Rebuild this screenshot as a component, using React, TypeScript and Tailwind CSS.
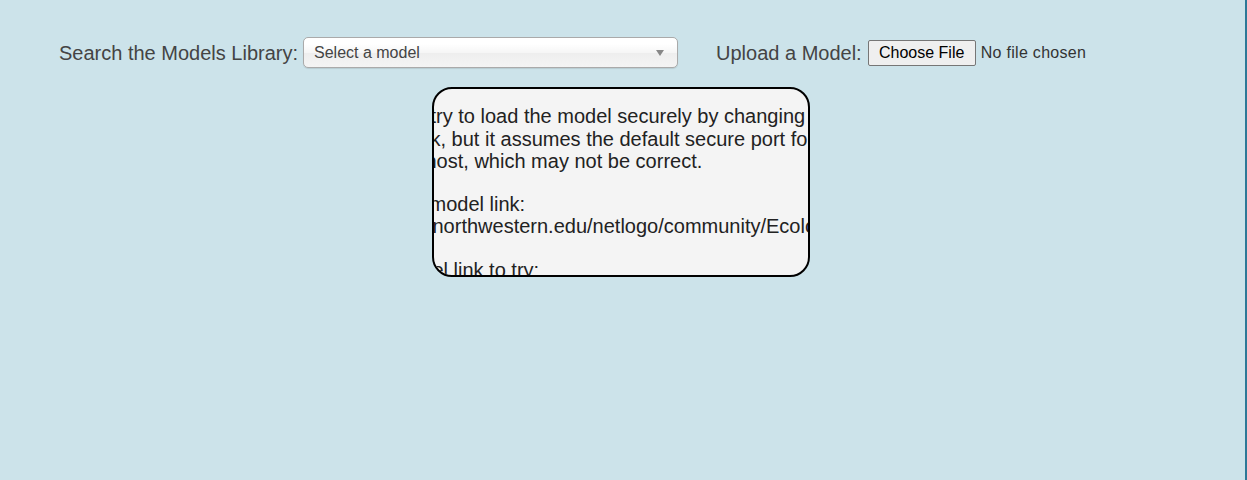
import React from 'react';

const font = { fontFamily: '"Liberation Sans", Arial, sans-serif' };

function ModelSelect() {
  return (
    <div className="relative flex h-[31px] w-[375px] items-center rounded-[5px] border border-[#aaa] bg-[linear-gradient(#fff_20%,#f6f6f6_50%,#eee_52%,#f4f4f4_100%)] pl-[10px] text-[16px] text-[#444] shadow-[0_1px_1px_rgba(0,0,0,0.1)]">
      <span>Select a model</span>
      <span className="absolute right-[13px] top-[12px] h-0 w-0 border-x-[4px] border-t-[6px] border-x-transparent border-t-[#888]" />
    </div>
  );
}

function FileInput() {
  return (
    <div className="flex items-center gap-[5px]">
      <button className="h-[26px] w-[108px] rounded-[2px] border border-[#767676] bg-[#efefef] text-[16px] leading-none text-black">
        Choose File
      </button>
      <span className="text-[16px] tracking-[0.3px] text-[#333]">No file chosen</span>
    </div>
  );
}

function WarningBox() {
  return (
    <div className="mx-auto h-[190px] w-[378px] overflow-hidden rounded-[20px] border-2 border-black bg-[#f4f4f4] -translate-x-[2px]">
      <div className="pt-[16px] text-[20px] leading-[22.5px] text-[#222] whitespace-nowrap">
        <div className="-ml-[3px]">try to load the model securely by changing the</div>
        <div className="-ml-[23px]">link, but it assumes the default secure port for the</div>
        <div className="-ml-[8px]">host, which may not be correct.</div>
        <div className="mt-[20px] -ml-[4px]">model link:</div>
        <div className="-ml-[1px]">northwestern.edu/netlogo/community/Ecology.nlogo</div>
        <div className="mt-[21px] -ml-[40px]">model link to try:</div>
      </div>
    </div>
  );
}

export default function App() {
  return (
    <div className="h-screen w-full overflow-hidden bg-[#cce3ea] border-r-2 border-[#2d7897]" style={font}>
      <div className="flex items-center pl-[59px] pt-[37px]">
        <span className="mr-[5px] text-[20px] text-[#444]">Search the Models Library:</span>
        <ModelSelect />
        <span className="ml-[38px] mr-[6px] text-[20px] text-[#444]">Upload a Model:</span>
        <FileInput />
      </div>
      <div className="mt-[19px]">
        <WarningBox />
      </div>
    </div>
  );
}
